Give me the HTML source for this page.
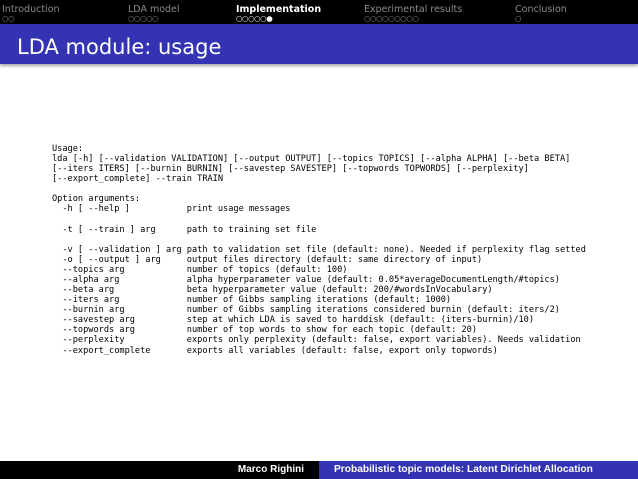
<!DOCTYPE html>
<html><head><style>
body{margin:0;width:638px;height:479px;position:relative;background:#fff;overflow:hidden;font-family:"DejaVu Sans","Liberation Sans",sans-serif}
#nav{position:absolute;left:0;top:0;width:638px;height:24px;background:#000}
.n{position:absolute;top:4px;font-size:9.5px;color:#8c8c8c;line-height:11px}
.n.a{color:#fff;font-weight:bold}
.d{position:absolute;top:15px;font-size:7.5px;color:#8c8c8c;letter-spacing:-0.5px;line-height:8px}
.d.a{color:#fff}
#tb{position:absolute;left:0;top:24px;width:638px;height:40px;background:#3333b3;box-shadow:0 2px 3px rgba(0,0,0,.35)}
#tb span{position:absolute;left:17px;top:11px;color:#fff;font-size:21px;line-height:24px}
pre{position:absolute;left:52px;top:144px;margin:0;font-family:"DejaVu Sans Mono","Liberation Mono",monospace;font-size:8.62px;line-height:10.08px;color:#000}
#f1{position:absolute;left:0;top:461px;width:319px;height:18px;background:#000;color:#fff;font-family:"Liberation Sans",sans-serif;font-size:10px;font-weight:bold;text-align:right;box-sizing:border-box;padding-right:15px;line-height:18px}
#f2{position:absolute;left:319px;top:461px;width:319px;height:18px;background:#3333b3;color:#fff;font-family:"Liberation Sans",sans-serif;font-size:10.2px;font-weight:bold;line-height:18px;box-sizing:border-box;padding-left:15px}
</style></head><body>
<div id="nav">
<div class="n" style="left:2px">Introduction</div><div class="d" style="left:2px">○○</div>
<div class="n" style="left:128px">LDA model</div><div class="d" style="left:128px">○○○○○</div>
<div class="n a" style="left:236px">Implementation</div><div class="d a" style="left:236px">○○○○○●</div>
<div class="n" style="left:364px">Experimental results</div><div class="d" style="left:364px">○○○○○○○○○</div>
<div class="n" style="left:515px">Conclusion</div><div class="d" style="left:515px">○</div>
</div>
<div id="tb"><span>LDA module: usage</span></div>
<pre>Usage:
lda [-h] [--validation VALIDATION] [--output OUTPUT] [--topics TOPICS] [--alpha ALPHA] [--beta BETA]
[--iters ITERS] [--burnin BURNIN] [--savestep SAVESTEP] [--topwords TOPWORDS] [--perplexity]
[--export_complete] --train TRAIN

Option arguments:
  -h [ --help ]           print usage messages

  -t [ --train ] arg      path to training set file

  -v [ --validation ] arg path to validation set file (default: none). Needed if perplexity flag setted
  -o [ --output ] arg     output files directory (default: same directory of input)
  --topics arg            number of topics (default: 100)
  --alpha arg             alpha hyperparameter value (default: 0.05*averageDocumentLength/#topics)
  --beta arg              beta hyperparameter value (default: 200/#wordsInVocabulary)
  --iters arg             number of Gibbs sampling iterations (default: 1000)
  --burnin arg            number of Gibbs sampling iterations considered burnin (default: iters/2)
  --savestep arg          step at which LDA is saved to harddisk (default: (iters-burnin)/10)
  --topwords arg          number of top words to show for each topic (default: 20)
  --perplexity            exports only perplexity (default: false, export variables). Needs validation
  --export_complete       exports all variables (default: false, export only topwords)</pre>
<div id="f1">Marco Righini</div>
<div id="f2">Probabilistic topic models: Latent Dirichlet Allocation</div>
</body></html>
